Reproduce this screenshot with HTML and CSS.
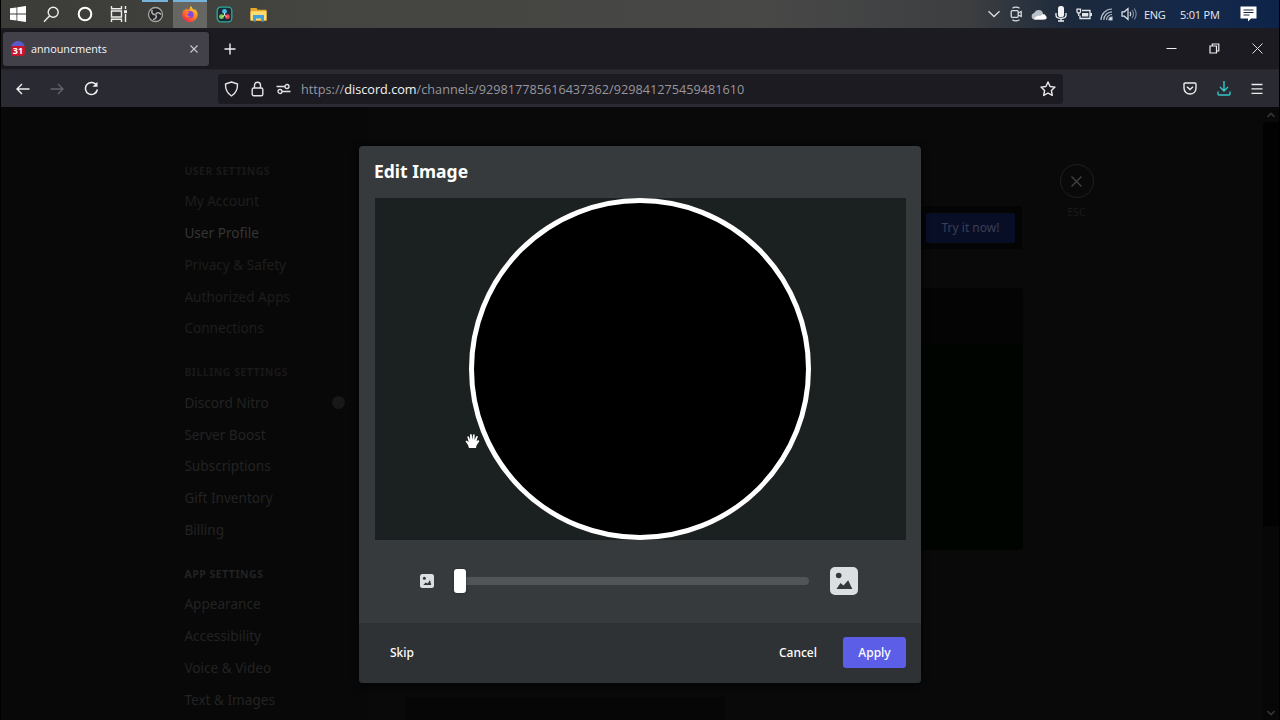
FILE: index.html
```html
<!DOCTYPE html>
<html lang="en">

<head>
    <meta charset="UTF-8" />
    <meta name="viewport" content="width=device-width, initial-scale=1.0" />
    <title>announcments</title>
    <link rel="stylesheet" href="styles.css">
</head>

<body>
    <header class="taskbar">
        <div class="pinned system">
            <span class="cell"><svg width="16" height="16" viewBox="0 0 16 16" fill="#fff"><path d="M0 2.3l6.5-.9v6.2H0zM7.3 1.3L16 0v7.6H7.3zM0 8.4h6.5v6.2L0 13.7zM7.3 8.4H16V16l-8.7-1.3z" /></svg></span>
            <span class="cell"><svg width="17" height="17" viewBox="0 0 17 17" fill="none" stroke="#eee" stroke-width="1.4"><circle cx="10.2" cy="6.2" r="5" /><path d="M6.7 9.8L1 15.8" /></svg></span>
            <span class="cell"><svg width="16" height="16" viewBox="0 0 16 16" fill="none" stroke="#fff" stroke-width="2"><circle cx="8" cy="8" r="6.3" /></svg></span>
            <span class="cell"><svg width="18" height="16" viewBox="0 0 18 16" fill="none" stroke="#eee" stroke-width="1.4"><path d="M1.5 0v2.8h10V0M1.5 16v-2.8h10V16M1.5 5h10v6h-10zM15.5 0v3M15.5 8v8" /><path d="M14 4.2h3v3h-3z" fill="#eee" stroke="none" /></svg></span>
        </div>
        <div class="pinned apps">
            <span class="cell open"><svg width="17" height="17" viewBox="0 0 17 17"><circle cx="8.5" cy="8.5" r="7" fill="#25262b" stroke="#aaa49f" stroke-width="1.3" /><g fill="none" stroke="#b3afae" stroke-width="1.6"><path d="M8.2 8.7C5 8.6 4.2 6 5.3 4" /><path d="M8.5 8.4c1.7-2.6 4.5-1.9 5.4.2" /><path d="M8.8 8.7c1.4 2.8-.5 4.8-2.8 4.6" /></g></svg></span>
            <span class="cell open active"><svg width="18" height="18" viewBox="0 0 18 18"><defs><linearGradient id="fox" x1=".9" y1="0" x2=".2" y2="1"><stop offset="0" stop-color="#ffe443" /><stop offset=".45" stop-color="#ff8a22" /><stop offset="1" stop-color="#f6214f" /></linearGradient></defs><path d="M9.8 1c1 .8 1.6 1.7 1.8 2.7 1 .2 1.7 1 2 1.6l.2-1.4C16 6 17 8.2 16.5 10.8 15.9 14.6 12.7 17 9 17c-4.3 0-7.8-3.3-7.8-7.6 0-2 .7-3.8 1.900-5l.4 1.300L5.300 3l.4 1.500c1.300-.2 2.300 0 2.800.2C8.500 3.200 9 2 9.800 1z" fill="url(#fox)" /><circle cx="9" cy="9.5" r="3.6" fill="#8247df" /><path d="M4.3 6.6c1.5-.6 3 .1 4.2.8-.3.8-1.8.8-2 1.900 0 1.700 1.800 2.800 3.700 2-1.500 1.900-5.600 1.600-6.100-1.400z" fill="#ff7139" /></svg></span>
            <span class="cell"><svg width="17" height="17" viewBox="0 0 17 17"><rect x="1.2" y="1.2" width="14.6" height="14.6" rx="3.5" fill="#1d2b38" stroke="#2ba99c" stroke-width="1.3" /><circle cx="8.5" cy="5.4" r="2.4" fill="#4ac0e7" /><circle cx="5.5" cy="10.7" r="2.4" fill="#7bcf55" /><circle cx="11.5" cy="10.7" r="2.4" fill="#ef4b50" /><path d="M8.5 7v2.3l-2 1.2M8.5 9.3l2 1.2" stroke="#fff" fill="none" stroke-width=".8" /></svg></span>
            <span class="cell"><svg width="17" height="15" viewBox="0 0 17 15"><path d="M.5 1h6l1.2 1.8h8.8V14H.5z" fill="#e9a827" /><path d="M.5 4.2h16V13H.5z" fill="#ffdc72" /><path d="M3 8h11v6.5h-3v-3H6v3H3z" fill="#43a0dd" /></svg></span>
        </div>
        <div class="tray">
            <span class="cell"><svg width="12" height="8" viewBox="0 0 12 8" fill="none" stroke="#ddd" stroke-width="1.3"><path d="M.5 1.3L6 6.5l5.5-5.2" /></svg></span>
            <span class="cell"><svg width="13" height="16" viewBox="0 0 13 16" fill="none" stroke="#d8dade" stroke-width="1.3"><rect x="1.2" y="4.7" width="7" height="6.6" rx="1" /><path d="M8.2 7l3-1.5v5L8.2 9M2.5 2.2C4 .8 7.5.8 9.5 2.2M2.5 13.8c1.5 1.4 5 1.4 7 0" /></svg></span>
            <span class="cell"><svg width="16" height="11" viewBox="0 0 16 11"><path d="M3.6 10.5a3.3 3.3 0 0 1-.4-6.5A4.8 4.8 0 0 1 11.8 3.4l.4 7z" fill="#b9c0c7" /><path d="M3 10.5c.8-3 4-4.5 6.5-3.5C11.5 4 15 5.2 14.6 7c1.6.4 1.4 3.4-.6 3.5z" fill="#fff" /></svg></span>
            <span class="cell"><svg width="12" height="16" viewBox="0 0 12 16"><rect x="3" y="0" width="6" height="11" rx="2.6" fill="#f1f2f4" /><path d="M1 7v2.3C1 13.5 11 13.5 11 9.3V7M6 12.5V15M3 15h6" fill="none" stroke="#f1f2f4" stroke-width="1.3" /></svg></span>
            <span class="cell"><svg width="16" height="13" viewBox="0 0 16 13" fill="none" stroke="#e4e7ea" stroke-width="1.3"><path d="M6 2.5h8v8H4V7.500M15.300 5v3" /><path d="M1 1.200v2.300c0 2 3.500 2 3.500 0V1.200zM2.700 5v3" /><path d="M6 5h6.300v3.500H6z" fill="#e4e7ea" stroke="none" /></svg></span>
            <span class="cell"><svg width="13" height="13" viewBox="0 0 13 13" fill="none" stroke="#b5bdc9" stroke-width="1.2"><path d="M1 12C1 6 6 1 12 1M3.8 12C3.8 7.5 7.5 3.8 12 3.8M6.5 12c0-3 2.5-5.500 5.500-5.500" /><path d="M9 12a3 3 0 0 1 3-3v3z" fill="#fff" /></svg></span>
            <span class="cell"><svg width="16" height="14" viewBox="0 0 16 14" fill="none" stroke="#e1e4ea" stroke-width="1.2"><path d="M1 4.8h2.3L7 1.5v11L3.3 9.2H1z" /><path d="M9 4.8q1.6 2.2 0 4.4" /><path d="M11 3q3 4 0 8M13.2 1.5q4 5.5 0 11" stroke="#78859a" /></svg></span>
            <span class="lang">ENG</span>
            <span class="clock">5:01 PM</span>
            <span class="notice"><svg width="17" height="16" viewBox="0 0 17 16"><path d="M.5.5h16v12H11L8 15.500v-3H.5z" fill="#fff" /><path d="M3.5 4h10M3.5 6.5h10M3.5 9h6" stroke="#18263f" stroke-width="1.1" /></svg></span>
        </div>
    </header>

    <div class="tabs">
        <div class="tab">
            <span class="favicon">31</span>
            <span class="tab-title">announcments</span>
            <svg width="8" height="8" viewBox="0 0 8 8" stroke="#c9c9ce" stroke-width="1.1"><path d="M.5.5l7 7M7.5.5l-7 7" /></svg>
        </div>
        <svg class="new-tab" width="12" height="12" viewBox="0 0 12 12" stroke="#f0f0f2" stroke-width="1.4"><path d="M6 .5v11M.5 6h11" /></svg>
        <div class="window-buttons">
            <svg width="11" height="11" viewBox="0 0 11 11" stroke="#eee"><path d="M.5 5.5h10" /></svg>
            <svg width="11" height="11" viewBox="0 0 11 11" fill="none" stroke="#eee" stroke-width="1.2"><path d="M1 3h6.5v7H1zM3.3 3V1h6.5v7H7.5" /></svg>
            <svg width="11" height="11" viewBox="0 0 11 11" stroke="#ddd"><path d="M.5.5l10 10M10.5.5l-10 10" /></svg>
        </div>
    </div>

    <nav class="toolbar">
        <div class="history">
            <svg width="14" height="12" viewBox="0 0 14 12" fill="none" stroke="#f0f0f2" stroke-width="1.4"><path d="M13.5 6H1M6 1L1 6l5 5" /></svg>
            <svg width="14" height="12" viewBox="0 0 14 12" fill="none" stroke="#63636b" stroke-width="1.3"><path d="M.5 6H13M8 1l5 5-5 5" /></svg>
            <svg width="15" height="15" viewBox="0 0 15 15" fill="none" stroke="#f0f0f2" stroke-width="1.5"><path d="M12.7 4.5A6 6 0 1 0 13.4 8.5" /><path d="M13.5.8v5H8.5z" fill="#f0f0f2" stroke="none" /></svg>
        </div>
        <div class="urlbar">
            <svg width="15" height="16" viewBox="0 0 15 16" fill="none" stroke="#e3e3e6" stroke-width="1.4"><path d="M7.5 1L13.5 3c.2 5-1.3 9-6 12C2.8 12 1.3 8 1.5 3z" stroke-linejoin="round" /></svg>
            <svg width="13" height="16" viewBox="0 0 13 16" fill="none" stroke="#e3e3e6" stroke-width="1.4"><rect x="1.2" y="7" width="10.6" height="7.8" rx="1.5" /><path d="M3.5 7V4.2c0-4 6-4 6 0V7" /></svg>
            <svg width="15" height="12" viewBox="0 0 15 12" fill="none" stroke="#e3e3e6" stroke-width="1.3"><path d="M.5 3.5H9M6 8.5h8.5" /><circle cx="11" cy="3.5" r="2" /><circle cx="4" cy="8.5" r="2" /></svg>
            <span class="url">https://<b>discord.com</b>/channels/929817785616437362/929841275459481610</span>
            <svg class="star" width="16" height="16" viewBox="0 0 16 16" fill="none" stroke="#ececef" stroke-width="1.4" stroke-linejoin="round"><path d="M8 1l2.1 4.5 4.9.6-3.6 3.4.9 4.9L8 12l-4.3 2.4.9-4.9L1 6.100l4.900-.6z" /></svg>
        </div>
        <div class="actions">
            <svg width="14" height="13" viewBox="0 0 14 13" fill="none" stroke="#ececef" stroke-width="1.4"><path d="M2 1h10a1 1 0 0 1 1 1v4c0 8-12 8-12 0V2a1 1 0 0 1 1-1z" /><path d="M4 4.7L7 7.6l3-2.9" /></svg>
            <svg width="14" height="15" viewBox="0 0 14 15" fill="none" stroke="#35c5ca" stroke-width="1.4"><path d="M7 0v9.5M3 6l4 4 4-4M1 10.5V13a1 1 0 0 0 1 1h10a1 1 0 0 0 1-1v-2.5" /></svg>
            <svg width="12" height="12" viewBox="0 0 12 12" stroke="#ececef" stroke-width="1.3"><path d="M.5 1.5h11M.5 5.9h11M.5 10.3h11" /></svg>
        </div>
    </nav>

    <main class="page">
        <aside class="sidebar">
            <h2 class="faded">User Settings</h2>
            <ul class="soft">
                <li>My Account</li>
                <li class="selected">User Profile</li>
                <li>Privacy &amp; Safety</li>
                <li>Authorized Apps</li>
                <li>Connections</li>
            </ul>
            <h2 class="faded">Billing Settings</h2>
            <ul>
                <li>Discord Nitro <i class="nitro"></i></li>
                <li>Server Boost</li>
                <li>Subscriptions</li>
                <li>Gift Inventory</li>
                <li>Billing</li>
            </ul>
            <h2>App Settings</h2>
            <ul>
                <li>Appearance</li>
                <li>Accessibility</li>
                <li>Voice &amp; Video</li>
                <li>Text &amp; Images</li>
            </ul>
        </aside>
        <section class="content">
            <div class="banner"><button class="try">Try it now!</button></div>
            <div class="preview"></div>
            <div class="field"></div>
        </section>
        <div class="close">
            <span class="close-ring"><svg width="11" height="11" viewBox="0 0 11 11" stroke="#434444" stroke-width="1.3"><path d="M.5.5l10 10M10.5.5l-10 10" /></svg></span>
            <span>ESC</span>
        </div>
        <div class="scrollbar">
            <svg width="8" height="6" viewBox="0 0 8 6" fill="none" stroke="#353535" stroke-width="1.6"><path d="M.5 5L4 1.5 7.5 5" /></svg>
            <svg width="8" height="6" viewBox="0 0 8 6" fill="none" stroke="#353535" stroke-width="1.6"><path d="M.5 1L4 4.5 7.5 1" /></svg>
        </div>

        <div class="modal">
            <h1>Edit Image</h1>
            <div class="crop">
                <div class="crop-circle"></div>
                <svg class="hand" width="15" height="16" viewBox="0 0 15 16"><path d="M4 15L3 12 .8 8.8C.2 7.8 1.5 7.2 2.3 8L3.7 9.200 2.400 4.300C2.100 3 3.700 2.700 4 3.800L5.100 7 5 2c0-1.300 1.700-1.300 1.800 0L7.300 6.800 8 2c.2-1.200 1.800-1 1.700.2L9.500 7l1.600-3.500c.5-1.100 2-.5 1.600.6L11.500 8.300l1-.8c.9-.7 2.200.2 1.500 1.200L11.500 12.500 11 15z" fill="#fff" /></svg>
            </div>
            <div class="zoom">
                <svg width="14" height="14" viewBox="0 0 28 28"><rect width="28" height="28" rx="5" fill="#dcdfe1" /><circle cx="8.7" cy="8.5" r="3" fill="#34383b" /><path d="M6.5 22l5-5 4 2L20 12l2.500 10z" fill="#34383b" /></svg>
                <div class="slider"><span class="thumb"></span></div>
                <svg width="28" height="28" viewBox="0 0 28 28"><rect width="28" height="28" rx="5" fill="#dcdfe1" /><circle cx="8.7" cy="8.5" r="2.8" fill="#34383b" /><path d="M6.500 22l4-6 3 2.600L18.200 13.300 22.300 22z" fill="#34383b" /></svg>
            </div>
            <footer>
                <button class="skip">Skip</button>
                <button class="cancel">Cancel</button>
                <button class="apply">Apply</button>
            </footer>
        </div>
    </main>
</body>

</html>
```
FILE: styles.css
```css
* {
    margin: 0;
    padding: 0;
    box-sizing: border-box;
}

body {
    width: 1280px;
    height: 720px;
    overflow: hidden;
    background: #000;
    border-left: 1px solid #000;
    border-right: 1px solid #000;
    font-family: 'Open Sans', sans-serif;
    color: #fff;
}

svg {
    display: block;
    flex: none;
}

button {
    border: none;
    background: none;
    font: inherit;
    color: inherit;
}

/* windows taskbar */
.taskbar {
    display: flex;
    height: 28px;
    background: linear-gradient(90deg, #3b3c37 0%, #444540 25%, #484847 60%, #3c3e40 76%, #1b293c 84%, #14284a 94%, #0d2449 100%);
}

.pinned {
    display: flex;
}

.cell {
    display: flex;
    align-items: center;
    justify-content: center;
}

.system .cell {
    width: 33.8px;
}

.apps {
    margin-left: 2px;
}

.apps .cell {
    width: 34.5px;
}

.apps .open {
    background: linear-gradient(#75b3dc, #75b3dc) center top / 26px 2px no-repeat;
}

.apps .active {
    background: linear-gradient(#75b3dc, #75b3dc) center top / 100% 2px no-repeat #666662;
}

.tray {
    display: flex;
    align-items: center;
    margin-left: auto;
    padding-right: 22px;
    font-size: 11px;
    color: #e8eaee;
}

.tray .cell {
    width: 22.5px;
}

.lang {
    width: 40px;
    padding-left: 4px;
    letter-spacing: -0.3px;
}

.clock {
    width: 60px;
    letter-spacing: -0.2px;
    white-space: nowrap;
}

/* browser */
.tabs {
    display: flex;
    align-items: center;
    height: 41px;
    padding-left: 2px;
    background: #1c1b22;
}

.tab {
    display: flex;
    align-items: center;
    width: 206px;
    height: 34px;
    padding: 0 11px 0 8px;
    border-radius: 3px;
    background: #42414a;
    box-shadow: 0 0 2px #111;
}

.favicon {
    width: 14px;
    height: 15px;
    padding-top: 5px;
    border-radius: 7px 7px 3px 3px;
    background: linear-gradient(#5b58c9 32%, #c5172b 33%);
    font-size: 9px;
    line-height: 9px;
    font-weight: 700;
    text-align: center;
}

.tab-title {
    flex: 1;
    margin-left: 6px;
    font-size: 10.8px;
    color: #f6f6f9;
}

.new-tab {
    margin-left: 15px;
}

.window-buttons {
    display: flex;
    gap: 32px;
    margin-left: auto;
    padding-right: 16px;
}

.toolbar {
    display: flex;
    align-items: center;
    height: 38px;
    border-top: 1px solid #25242c;
    background: #2a2a32;
}

.history {
    display: flex;
    align-items: center;
    gap: 20px;
    width: 217px;
    padding-left: 15px;
}

.urlbar {
    display: flex;
    align-items: center;
    gap: 12px;
    width: 845px;
    height: 30px;
    padding: 0 7px 0 6px;
    border-radius: 3px;
    background: #1c1b22;
}

.url {
    margin-left: -2px;
    font-size: 12.68px;
    color: #96969c;
}

.url b {
    font-weight: 400;
    color: #f4f4f6;
}

.star {
    margin-left: auto;
}

.actions {
    display: flex;
    align-items: center;
    gap: 20px;
    margin-left: auto;
    padding-right: 16.5px;
}

/* settings page, dimmed behind the dialog */
.page {
    position: relative;
    display: flex;
    height: 613px;
    background: #090909;
    font-family: 'Noto Sans', sans-serif;
}

.sidebar {
    width: 367px;
    padding: 35.4px 20px 0 183.4px;
    background: #080808;
    color: #222323;
}

.sidebar h2 {
    padding: 20.6px 0 6.1px;
    font-size: 10.5px;
    line-height: 16px;
    font-weight: 700;
    letter-spacing: 0.5px;
    text-transform: uppercase;
}

.sidebar .faded {
    color: #191919;
}

.sidebar ul {
    list-style: none;
}

.sidebar li {
    display: flex;
    align-items: center;
    height: 31.75px;
    font-size: 13.6px;
}

.soft li {
    color: #1d1e1e;
}

.soft .selected {
    color: #343535;
}

.nitro {
    width: 13px;
    height: 13px;
    margin-left: auto;
    margin-right: 3px;
    border-radius: 50%;
    background: #181819;
}

.content {
    width: 655px;
    padding: 99px 0 0 37px;
}

.banner {
    display: flex;
    justify-content: flex-end;
    align-items: center;
    width: 617px;
    height: 43px;
    padding-right: 7px;
    background: #040405;
}

.try {
    width: 89px;
    height: 30px;
    border-radius: 2px;
    background: #090e27;
    font-size: 12px;
    color: #3b3f55;
}

.preview {
    width: 618px;
    height: 262px;
    margin-top: 39px;
    border-top: 56px solid #040404;
    border-radius: 4px;
    background: #000400;
}

.field {
    width: 320px;
    height: 40px;
    margin-top: 147px;
    background: #060606;
}

.close {
    display: flex;
    flex-direction: column;
    align-items: center;
    gap: 7px;
    width: 107px;
    padding: 57px 0 0;
    font-size: 10.5px;
    color: #191a1a;
}

.close-ring {
    display: flex;
    align-items: center;
    justify-content: center;
    width: 34px;
    height: 34px;
    border: 1px solid #1e1f1f;
    border-radius: 50%;
}

.scrollbar {
    display: flex;
    flex-direction: column;
    justify-content: space-between;
    align-items: center;
    width: 16px;
    margin-left: auto;
    padding: 5px 0 4px;
    background: linear-gradient(#090909 15px, #020202 15px, #020202 419px, #070707 419px);
}

/* dialog */
.modal {
    position: absolute;
    top: 39px;
    left: 358px;
    width: 562px;
    height: 537px;
    border-radius: 4px;
    background: #363a3d;
    box-shadow: 0 1px 7px #000407;
    overflow: hidden;
}

.modal h1 {
    height: 52px;
    padding-left: 15px;
    font-size: 17.5px;
    line-height: 51px;
    font-weight: 700;
}

.crop {
    position: relative;
    width: 531px;
    height: 342px;
    margin: 0 auto;
    background: #1b2020;
}

.crop-circle {
    width: 342px;
    height: 342px;
    margin: 0 auto;
    border: 5px solid #fff;
    border-radius: 50%;
    background: #000;
}

.hand {
    position: absolute;
    left: 90px;
    top: 235px;
}

.zoom {
    display: flex;
    align-items: center;
    height: 83px;
    padding: 0 63px 2px 61px;
}

.slider {
    flex: 1;
    height: 8px;
    margin: 0 21px 0 20px;
    border-radius: 4px;
    background: #515558;
}

.thumb {
    display: block;
    width: 12px;
    height: 24px;
    margin-top: -8px;
    border-radius: 3px;
    background: #fff;
    box-shadow: 0 0 2px #222;
}

.modal footer {
    display: flex;
    align-items: center;
    height: 60px;
    padding: 0 15px 2px 31px;
    background: #2e3235;
    font-size: 12px;
    font-weight: 500;
}

.cancel {
    margin-left: auto;
    margin-right: 26px;
}

.apply {
    width: 63px;
    height: 31px;
    border-radius: 3px;
    background: #5c5ee8;
}
```
